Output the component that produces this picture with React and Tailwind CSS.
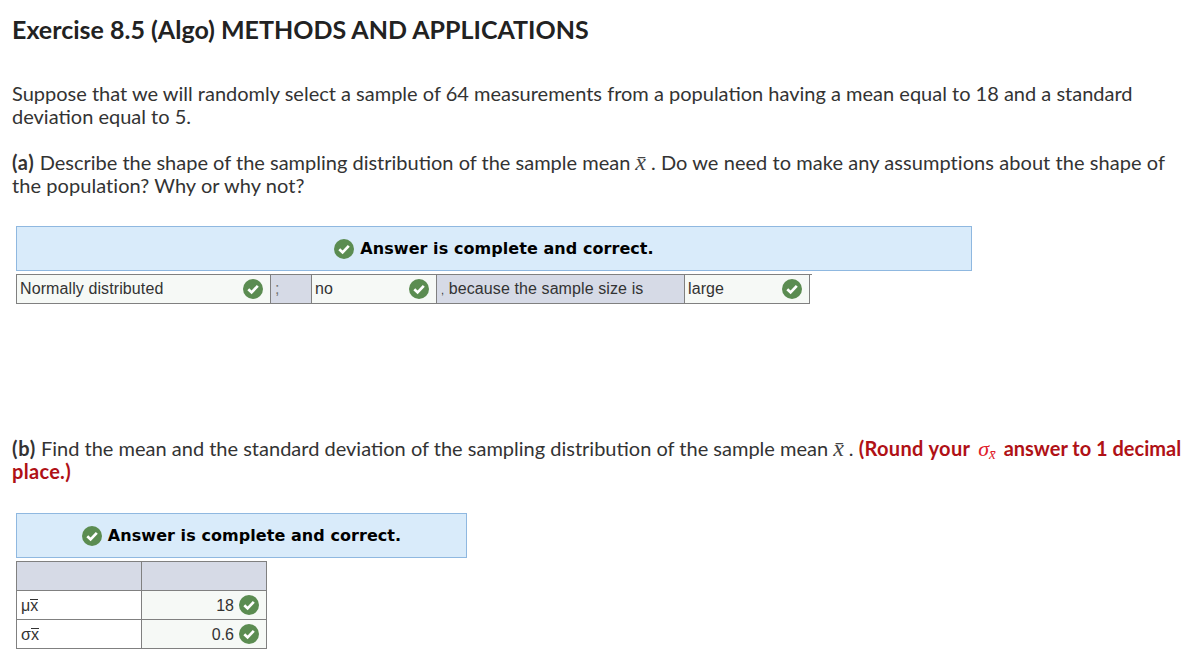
const CheckIcon = () => (
  <svg width="20" height="20" viewBox="0 0 20 20" className="shrink-0">
    <circle cx="10" cy="10" r="10" fill="#5b8c51" />
    <path d="M5.3 10.2 8.6 13.4 14.8 6.9" fill="none" stroke="#fff" strokeWidth="2.7" />
  </svg>
);

const XBar = () => (
  <span className="mx-[5px] font-['Liberation_Serif',serif] italic text-[24px] leading-[14px] text-[#444]">x̄</span>
);

const Banner = ({ className }) => (
  <div className={`flex items-center justify-center gap-[6px] bg-[#d9ebfa] border border-[#8fb8e0] font-['DejaVu_Sans',sans-serif] font-bold text-[16px] tracking-[0.06px] text-black ${className}`}>
    <CheckIcon />
    <span>Answer is complete and correct.</span>
  </div>
);

const Cell = ({ width, gray, children }) => (
  <div className={`flex items-center justify-between pl-[3px] pr-[7px] border-r border-[#808080] ${gray ? 'bg-[#d6dae6]' : 'bg-[#f6f9f6]'} ${width}`}>
    {children}
  </div>
);

const OverX = () => (
  <span className="inline-block border-t border-[#333] leading-[11px]">x</span>
);

export default function App() {
  return (
    <div className="h-[655px] overflow-hidden bg-white pl-3 pr-1 font-['Lato',sans-serif] text-[#333] text-[20px] leading-[23px]">
      <h1 className="pt-[16px] text-[25px] leading-[26px] font-bold text-[#222]">Exercise 8.5 (Algo) METHODS AND APPLICATIONS</h1>

      <p className="mt-[40px]">
        Suppose that we will randomly select a sample of 64 measurements from a population having a mean equal to 18 and a standard deviation equal to 5.
      </p>

      <p className="mt-[23px]">
        <b className="tracking-[0.7px]">(a)</b> Describe the shape of the sampling distribution of the sample mean<XBar /><span className="tracking-[0.06px]">. Do we need to make any assumptions about the shape of the population? Why or why not?</span>
      </p>

      <Banner className="ml-1 mt-[29px] w-[956px] h-[45px]" />

      {/* Answer row for part a */}
      <div className="ml-1 mt-[3px] w-[796px] border-t border-[#808080] font-['Liberation_Sans',sans-serif] text-[16px] tracking-[0.1px] text-[#333]">
        <div className="flex w-fit h-[29px] border-l border-b border-[#808080]">
          <Cell width="w-[254px]"><span className="pb-[2px]">Normally distributed</span> <CheckIcon /></Cell>
          <Cell width="w-[41px]" gray><span className="pb-[2px] ml-[1px] text-[#777]">;</span></Cell>
          <Cell width="w-[125px]"><span className="pb-[2px]">no</span> <CheckIcon /></Cell>
          <Cell width="w-[248px]" gray><span className="ml-[1px]"><span className="text-[11px]">,</span> because the sample size is</span></Cell>
          <Cell width="w-[125px]"><span className="pb-[2px]">large</span> <CheckIcon /></Cell>
        </div>
      </div>

      <p className="mt-[133px]">
        <b className="tracking-[0.7px]">(b)</b> Find the mean and the standard deviation of the sampling distribution of the sample mean<XBar />. <b className="text-[#b01116]"><span className="tracking-[0.35px]">(Round your</span> <span className="font-['Liberation_Serif',serif] italic font-normal text-[22px] leading-[14px] text-[#e0202a] mx-[3px]">σ<span className="text-[15px] leading-[10px] align-[-3px]">x̄</span></span> answer to 1 decimal <span className="tracking-[0.3px]">place.)</span></b>
      </p>

      <Banner className="ml-1 mt-[30px] w-[451px] h-[45px]" />

      {/* Answer table for part b */}
      <div className="ml-1 mt-[3px] grid grid-cols-[125px_125px] grid-rows-[29px_29px_29px] w-fit border-l border-t border-[#808080] font-['Liberation_Sans',sans-serif] text-[16px] text-[#333]">
        <div className="bg-[#d6dae6] border-r border-b border-[#808080]" />
        <div className="bg-[#d6dae6] border-r border-b border-[#808080]" />
        <div className="flex items-center pl-1 border-r border-b border-[#808080]"><span>μ<OverX /></span></div>
        <div className="flex items-center justify-end gap-[5px] pr-[7px] bg-[#f6f9f6] border-r border-b border-[#808080]">18 <CheckIcon /></div>
        <div className="flex items-center pl-1 border-r border-b border-[#808080]"><span>σ<OverX /></span></div>
        <div className="flex items-center justify-end gap-[5px] pr-[7px] bg-[#f6f9f6] border-r border-b border-[#808080]">0.6 <CheckIcon /></div>
      </div>
    </div>
  );
}
